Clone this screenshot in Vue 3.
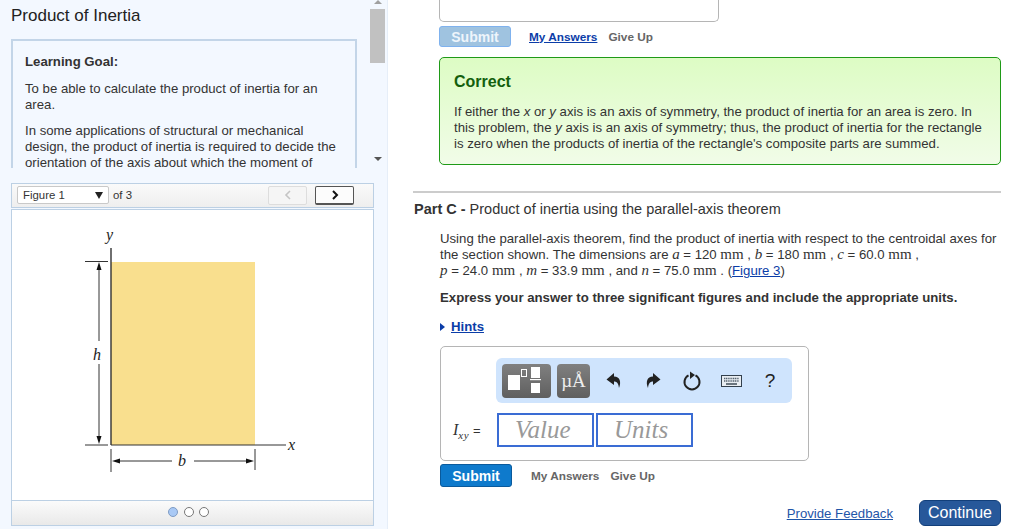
<script setup>
const dots = [true, false, false]
</script>

<template>
  <div class="page">
    <aside class="left">
      <div class="intro">
        <div class="intro-body">
          <h1 class="title">Product of Inertia</h1>
          <div class="goal">
            <div class="goal-head">Learning Goal:</div>
            <p>To be able to calculate the product of inertia for an area.</p>
            <p>In some applications of structural or mechanical design, the product of inertia is required to decide the orientation of the axis about which the moment of inertia is maximum.</p>
          </div>
        </div>
        <div class="scrollbar">
          <span class="arrow-up"></span>
          <span class="thumb"></span>
          <span class="arrow-down"></span>
        </div>
      </div>

      <div class="figure-wrap">
        <div class="figure-bar">
          <div class="select">
            <span>Figure 1</span>
            <span class="select-caret"></span>
          </div>
          <span class="of">of 3</span>
          <button class="nav nav-off">
            <svg width="8" height="10" viewBox="0 0 8 10"><path d="M6 1 2 5l4 4" fill="none" stroke="#c4c4c4" stroke-width="1.6" /></svg>
          </button>
          <button class="nav nav-on">
            <svg width="8" height="10" viewBox="0 0 8 10"><path d="M2 1l4 4-4 4" fill="none" stroke="#111" stroke-width="2" /></svg>
          </button>
        </div>
        <div class="figure">
          <svg class="diagram" viewBox="12 210 360 290" width="360" height="290">
            <rect x="111" y="262" width="144" height="183" fill="#f9df8e" />
            <g stroke="#333" fill="none">
              <path d="M111 248V445" stroke-width="1.4" />
              <path d="M111 445H286" stroke-width="1.2" />
              <path d="M85 261.5H108M85 445H108" />
              <path d="M99 266V341M99 364V440" />
              <path d="M111 449V472M255 449V470" />
              <path d="M116 461H172M194 461H250" />
            </g>
            <g fill="#111">
              <path d="M99 262l-2.5 8h5zM99 444l-2.500-8h5zM112 461l8-2.500v5zM254 461l-8-2.500v5z" />
            </g>
            <g class="axis-label">
              <text x="106" y="240">y</text>
              <text x="93" y="360">h</text>
              <text x="288" y="450">x</text>
              <text x="178" y="466">b</text>
            </g>
          </svg>
        </div>
        <div class="dots">
          <span v-for="(on, i) in dots" :key="i" class="dot" :class="{ active: on }"></span>
        </div>
      </div>
    </aside>

    <main class="right">
      <div class="prev-answer"></div>
      <div class="actions actions-top">
        <button class="submit submit-off">Submit</button>
        <a class="my-answers link">My Answers</a>
        <span class="give-up">Give Up</span>
      </div>

      <section class="correct">
        <h2>Correct</h2>
        <p>If either the <i>x</i> or <i>y</i> axis is an axis of symmetry, the product of inertia for an area is zero. In this problem, the <i>y</i> axis is an axis of symmetry; thus, the product of inertia for the rectangle is zero when the products of inertia of the rectangle's composite parts are summed.</p>
      </section>

      <hr class="rule" />

      <h3 class="part"><b>Part C -</b> Product of inertia using the parallel-axis theorem</h3>

      <div class="part-body">
        <p class="question">
          Using the parallel-axis theorem, find the product of inertia with respect to the centroidal axes for the section shown. The dimensions are
          <span class="m"><i>a</i></span> = 120 <span class="m">mm</span> , <span class="m"><i>b</i></span> = 180 <span class="m">mm</span> , <span class="m"><i>c</i></span> = 60.0 <span class="m">mm</span> ,<br />
          <span class="m"><i>p</i></span> = 24.0 <span class="m">mm</span> , <span class="m"><i>m</i></span> = 33.9 <span class="m">mm</span> , and <span class="m"><i>n</i></span> = 75.0 <span class="m">mm</span> . (<a class="link">Figure 3</a>)
        </p>
        <p class="express">Express your answer to three significant figures and include the appropriate units.</p>
        <div class="hints"><span class="hints-caret"></span><a class="link">Hints</a></div>

        <div class="answer">
          <div class="toolbar">
            <div class="tool tool-templates">
              <svg width="49" height="34" viewBox="0 0 49 34">
                <rect x="6" y="11" width="12" height="15" fill="#fff" />
                <rect x="19.5" y="5.5" width="5" height="7" fill="none" stroke="#fff" />
                <rect x="29" y="3" width="9" height="11" fill="#fff" />
                <rect x="28" y="15" width="11" height="1.200" fill="#fff" />
                <rect x="29" y="19" width="9" height="10" fill="#fff" />
              </svg>
            </div>
            <div class="tool tool-units">µÅ</div>
            <div class="icons">
              <span class="icon">
                <svg width="18" height="18" viewBox="0 0 18 18"><path d="M9 1 1.500 7.500 9 13V9.500c3 0 4.500 2 5 6.500 2.500-6 1-11.500-5-11.500z" fill="#222" /></svg>
              </span>
              <span class="icon">
                <svg width="18" height="18" viewBox="0 0 18 18"><path d="M9 1l7.500 6.500L9 13V9.500c-3 0-4.500 2-5 6.500C1.500 10 3 4.500 9 4.500z" fill="#222" /></svg>
              </span>
              <span class="icon">
                <svg width="20" height="20" viewBox="0 0 20 20"><path d="M6.500 4.300a7.500 7.500 0 1 0 7 0" fill="none" stroke="#222" stroke-width="2" /><path d="M8 .5v7.500l5-4z" fill="#222" /></svg>
              </span>
              <span class="icon">
                <svg width="21" height="12" viewBox="0 0 21 12">
                  <rect x="0.500" y="0.500" width="20" height="11" fill="#e8edf2" stroke="#33404d" />
                  <path d="M3 3.500h15M3 6h15" stroke="#56636f" stroke-width="1.400" stroke-dasharray="1.200 .6" />
                  <path d="M5 9h11" stroke="#33404d" stroke-width="1.400" />
                </svg>
              </span>
              <span class="icon help">?</span>
            </div>
          </div>
          <div class="answer-row">
            <span class="lhs"><i>I</i><sub><i>xy</i></sub> <span class="eq">=</span></span>
            <div class="field">Value</div>
            <div class="field">Units</div>
          </div>
        </div>

        <div class="actions actions-bottom">
          <button class="submit">Submit</button>
          <span class="my-answers">My Answers</span>
          <span class="give-up">Give Up</span>
        </div>
      </div>

      <div class="footer">
        <a class="feedback">Provide Feedback</a>
        <button class="continue">Continue</button>
      </div>
    </main>
  </div>
</template>

<style>
html, body {
  margin: 0;
  overflow: hidden;
}
</style>

<style scoped>
.page {
  display: flex;
  width: 1024px;
  height: 529px;
  overflow: hidden;
  background: #fff;
  color: #333;
  font-family: "Liberation Sans", Arial, sans-serif;
  font-size: 13.2px;
  line-height: 16px;
}

p, h1, h2, h3 {
  margin: 0;
  font-weight: normal;
}

.left {
  flex: none;
  box-sizing: border-box;
  width: 388px;
  background: #f3f8ff;
  border-right: 1px solid #e6eef8;
}

.intro {
  display: flex;
  height: 168px;
  overflow: hidden;
}

.intro-body {
  box-sizing: border-box;
  width: 370px;
  padding: 7px 13px 0 11px;
}

.title {
  font-size: 17px;
  line-height: 18px;
  color: #222;
}

.goal {
  margin-top: 14px;
  padding: 13px 12px 0;
  border: 2px solid #c3d5e8;
  border-width: 2px 2px 0;
  height: 200px;
}

.goal-head {
  font-weight: bold;
  margin-bottom: 11px;
}

.goal p {
  margin-bottom: 10px;
}

.scrollbar {
  position: relative;
  width: 16px;
  height: 168px;
}

.thumb {
  position: absolute;
  top: 9px;
  left: 0;
  width: 15px;
  height: 54px;
  background: #c1c1c1;
}

.arrow-up, .arrow-down {
  position: absolute;
  left: 4px;
  width: 0;
  height: 0;
  border-left: 4px solid transparent;
  border-right: 4px solid transparent;
}

.arrow-up {
  top: 0;
  border-bottom: 4px solid #a0a0a0;
}

.arrow-down {
  top: 157px;
  border-top: 4px solid #555;
}

.figure-wrap {
  margin: 15px 0 0 11px;
  width: 363px;
}

.figure-bar {
  box-sizing: border-box;
  display: flex;
  align-items: center;
  height: 25px;
  padding: 0 19px 1px 5px;
  border: 1px solid #bcd0e4;
  background: linear-gradient(#fafafa, #eee);
  font-size: 11.4px;
}

.select {
  box-sizing: border-box;
  display: flex;
  justify-content: space-between;
  align-items: center;
  width: 92px;
  height: 18px;
  padding: 0 5px 0 5px;
  background: #fff;
  border: 1px solid #c9c9c9;
  border-radius: 2px;
  color: #333;
}

.select-caret {
  width: 0;
  height: 0;
  border-left: 4px solid transparent;
  border-right: 4px solid transparent;
  border-top: 7px solid #222;
}

.of {
  margin-left: 4px;
  flex: 1;
}

.nav {
  box-sizing: border-box;
  display: flex;
  align-items: center;
  justify-content: center;
  width: 39px;
  height: 19px;
  padding: 0;
  background: #fcfcfc;
  border-radius: 2px;
}

.nav-off {
  border: 1px solid #ddd;
  margin-right: 8px;
  background: #f5f5f5;
}

.nav-on {
  border: 1px solid #555;
  border-bottom-width: 2px;
}

.figure {
  box-sizing: border-box;
  height: 291px;
  margin-top: 1px;
  background: #fff;
  border: 1px solid #bcd0e4;
  border-bottom: 0;
}

.diagram {
  display: block;
}

.axis-label text {
  font-family: "Liberation Serif", serif;
  font-style: italic;
  font-size: 16px;
  fill: #222;
}

.dots {
  box-sizing: border-box;
  display: flex;
  justify-content: center;
  align-items: center;
  gap: 5.500px;
  height: 26px;
  padding: 0 8px 2px 0;
  border: 1px solid #bcd0e4;
  background: linear-gradient(#fbfbfb, #e9e9e9);
}

.dot {
  box-sizing: border-box;
  width: 10px;
  height: 10px;
  border-radius: 50%;
  border: 1.500px solid #777;
  background: #fff;
}

.dot.active {
  background: #a9c9f5;
  border-color: #7f9cc4;
}

.right {
  flex: 1;
  min-width: 0;
  padding-left: 25px;
  padding-right: 23px;
}

.prev-answer {
  box-sizing: border-box;
  margin-left: 26px;
  width: 280px;
  height: 22px;
  border: 1px solid #b5b5b5;
  border-top: 0;
  border-radius: 0 0 5px 5px;
}

.actions {
  display: flex;
  align-items: center;
  font-size: 11.8px;
  font-weight: bold;
}

.actions-top {
  margin: 4px 0 0 26px;
}

.actions-bottom {
  margin: 3px 0 0;
}

.submit {
  box-sizing: border-box;
  width: 72px;
  height: 23px;
  padding: 0;
  border: 1px solid #0a5a9c;
  border-radius: 3px;
  background: #0e7acc;
  color: #fff;
  font: bold 14px "Liberation Sans", Arial, sans-serif;
}

.submit-off {
  height: 21px;
  background: #9fc3e0;
  border-color: #7fb2ee;
  color: #eef5fb;
}

.actions-top .my-answers {
  margin-left: 18px;
}

.my-answers {
  margin-left: 19px;
  color: #666;
}

.give-up {
  margin-left: 11px;
  color: #666;
}

.link {
  color: #0b3da8;
  text-decoration: underline;
}

.correct {
  box-sizing: border-box;
  margin: 10px 0 0 26px;
  width: 562px;
  height: 108px;
  padding: 15px 14px 0;
  border: 1px solid #1f9a17;
  border-radius: 5px;
  background: linear-gradient(#ddfcc4, #f1fce8);
}

.correct h2 {
  font-size: 16px;
  font-weight: bold;
  line-height: 18px;
  color: #135f0d;
  margin-bottom: 13px;
}

.rule {
  margin: 26px 0 0;
  border: 0;
  height: 2px;
  background: #ccc;
}

.part {
  margin: 8px 0 0 1px;
  font-size: 14.500px;
  line-height: 17px;
}

.part-body {
  padding-left: 27px;
}

.question {
  margin-top: 13px;
}

.m {
  font-family: "Liberation Serif", serif;
  font-size: 15px;
  line-height: 0;
}

.express {
  margin-top: 11px;
  font-weight: bold;
}

.hints {
  display: flex;
  align-items: center;
  gap: 6px;
  margin-top: 13px;
  font-weight: bold;
}

.hints-caret {
  width: 0;
  height: 0;
  border-top: 4px solid transparent;
  border-bottom: 4px solid transparent;
  border-left: 5px solid #0b3da8;
}

.answer {
  box-sizing: border-box;
  width: 369px;
  height: 115px;
  margin-top: 11px;
  padding: 11px 16px 0 13px;
  border: 1px solid #b5b5b5;
  border-radius: 5px;
}

.toolbar {
  display: flex;
  align-items: center;
  margin-left: 42px;
  width: 296px;
  height: 45px;
  box-sizing: border-box;
  padding-left: 6px;
  gap: 6px;
  background: #cfe4fd;
  border-radius: 6px;
}

.tool {
  display: flex;
  align-items: center;
  justify-content: center;
  height: 34px;
  background: linear-gradient(#808080, #5f5f5f);
  border-radius: 4px;
}

.tool-templates {
  width: 49px;
}

.tool-units {
  width: 33px;
  color: #eee;
  font-family: "Liberation Serif", serif;
  font-size: 19px;
}

.icons {
  display: flex;
  align-items: center;
  margin-left: -1.500px;
}

.icon {
  display: flex;
  align-items: center;
  justify-content: center;
  width: 39px;
}

.help {
  font-size: 19px;
  color: #222;
}

.answer-row {
  display: flex;
  align-items: center;
  margin-top: 10px;
}

.lhs {
  box-sizing: border-box;
  width: 44px;
  margin-left: -1px;
  padding-left: 0;
  font-family: "Liberation Serif", serif;
  font-size: 16px;
}

.lhs sub {
  font-size: 11px;
  line-height: 0;
  letter-spacing: 0.5px;
}

.eq {
  font-family: "Liberation Sans", Arial, sans-serif;
  font-size: 13px;
}

.field {
  box-sizing: border-box;
  width: 97px;
  height: 34px;
  margin-right: 2px;
  padding-left: 16px;
  border: 2px solid #3a6cd4;
  color: #999;
  font: italic 25px/29px "Liberation Serif", serif;
}

.footer {
  display: flex;
  align-items: center;
  justify-content: flex-end;
  gap: 26px;
  margin-top: 13px;
}

.feedback {
  margin-top: 1px;
  color: #1f55a8;
  text-decoration: underline;
}

.continue {
  box-sizing: border-box;
  width: 82px;
  height: 26px;
  padding: 0;
  border: 1px solid #123f7a;
  border-radius: 6px;
  background: #27589a;
  color: #fff;
  font: 16px "Liberation Sans", Arial, sans-serif;
}
</style>
